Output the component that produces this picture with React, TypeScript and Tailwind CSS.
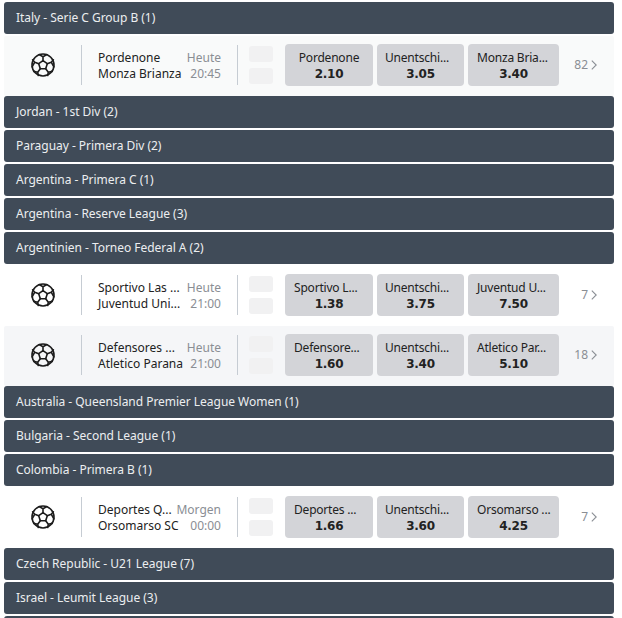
const Ball = () => (
  <svg width="24" height="24" viewBox="0 0 24 24" fill="none" stroke="#1c1c1c" strokeWidth="1.6" strokeLinejoin="round" strokeLinecap="round">
    <circle cx="12" cy="12" r="11" />
    <path d="M12 7.6l4.3 3.1-1.6 5H9.3l-1.6-5z" />
    <path d="M12 7.6V3.8M8.2 1.6L12 3.8l3.8-2.2" />
    <path d="M16.3 10.7l3.9-1.5 2.2-2.4M20.2 9.2l2.7 4.6" />
    <path d="M7.7 10.7L3.8 9.2 1.6 6.8M3.8 9.2l-2.7 4.6" />
    <path d="M14.7 15.7l2.6 3.5-.6 3.3M17.3 19.2l4-.8" />
    <path d="M9.3 15.7l-2.6 3.5.6 3.3M6.7 19.2l-4-.8" />
  </svg>
);

const Chevron = () => (
  <svg width="6" height="10" viewBox="0 0 6 10" fill="none" stroke="#8a8e94" strokeWidth="1.1">
    <path d="M0.8 0.6L5.2 5L0.8 9.4" />
  </svg>
);

const Header = ({ text, gap }: { text: string; gap?: boolean }) => (
  <div className={`h-[32px] flex items-center pl-3 bg-[#404b58] text-[#eceef0] rounded-[3px] text-[12px] tracking-[-0.03px] shrink-0 ${gap ? "mt-[2px]" : ""}`}>
    {text}
  </div>
);

type M = { a: string; b: string; d: string; t: string; o: [string, string][]; more: string; bg: string; gap?: boolean };

const Odd = ({ w, n, v, pad }: { w: string; n: string; v: string; pad: string }) => (
  <div className={`${w} h-[42px] pt-[1px] bg-[#d3d4d8] rounded-[4px] flex flex-col items-center justify-center text-[#222] text-[12px] leading-[16px] shrink-0`}>
    <span className={`w-full whitespace-nowrap tracking-[-0.2px] ${n.endsWith("...") ? `text-left ${pad}` : "text-center"}`}>{n}</span>
    <span className="font-bold text-[12px] leading-[16px] tracking-[-0.3px] font-['DejaVu_Sans',sans-serif]">{v}</span>
  </div>
);

const Match = ({ m }: { m: M }) => (
  <div className={`h-[60px] pt-[8px] pb-[10px] flex items-center rounded-[2px] ${m.bg} ${m.gap ? "mt-[2px]" : ""}`}>
    <div className="w-[77px] pl-[1px] flex justify-center shrink-0"><Ball /></div>
    <div className="w-px h-[40px] bg-[#c6ccd3] shrink-0" />
    <div className="w-[155px] pl-[16px] pr-[16px] pt-[1px] shrink-0 text-[12px] leading-[16px] text-[#222]">
      <div className="flex justify-between gap-1 whitespace-nowrap"><span>{m.a}</span><span className="text-[#8a8e94]">{m.d}</span></div>
      <div className="flex justify-between gap-1 whitespace-nowrap"><span>{m.b}</span><span className="text-[#8a8e94]">{m.t}</span></div>
    </div>
    <div className="w-px h-[40px] bg-[#c6ccd3] shrink-0" />
    <div className="w-[47px] pl-[11px] flex flex-col gap-[6px] shrink-0">
      <div className="w-[24px] h-[16px] bg-[#f1f1f2] rounded-[3px]" />
      <div className="w-[24px] h-[16px] bg-[#f1f1f2] rounded-[3px]" />
    </div>
    <div className="flex gap-[4px] shrink-0">
      <Odd w="w-[88px]" pad="pl-[9px]" n={m.o[0][0]} v={m.o[0][1]} />
      <Odd w="w-[87px]" pad="pl-[8px]" n={m.o[1][0]} v={m.o[1][1]} />
      <Odd w="w-[91px]" pad="pl-[9px]" n={m.o[2][0]} v={m.o[2][1]} />
    </div>
    <div className="flex-1 flex items-center justify-end text-[12px] text-[#8a8e94] gap-[3px] pr-[17px]">
      <span>{m.more}</span><Chevron />
    </div>
  </div>
);

const matches: Record<string, M> = {
  p: { a: "Pordenone", b: "Monza Brianza", d: "Heute", t: "20:45", more: "82", bg: "bg-[#f9fafa]", gap: true, o: [["Pordenone", "2.10"], ["Unentschi...", "3.05"], ["Monza Bria...", "3.40"]] },
  s: { a: "Sportivo Las ...", b: "Juventud Uni...", d: "Heute", t: "21:00", more: "7", bg: "bg-white", gap: true, o: [["Sportivo L...", "1.38"], ["Unentschi...", "3.75"], ["Juventud U...", "7.50"]] },
  d: { a: "Defensores ...", b: "Atletico Parana", d: "Heute", t: "21:00", more: "18", bg: "bg-[#f5f6f8]", o: [["Defensore...", "1.60"], ["Unentschi...", "3.40"], ["Atletico Par...", "5.10"]] },
  o: { a: "Deportes Q...", b: "Orsomarso SC", d: "Morgen", t: "00:00", more: "7", bg: "bg-white", gap: true, o: [["Deportes ...", "1.66"], ["Unentschi...", "3.60"], ["Orsomarso ...", "4.25"]] },
};

export default function App() {
  return (
    <div className="w-[622px] h-[618px] overflow-hidden bg-white pt-[2px] pl-[4px] pr-[8px] flex flex-col font-['Noto_Sans','DejaVu_Sans',sans-serif]">
      <Header text="Italy - Serie C Group B (1)" />
      <Match m={matches.p} />
      <Header text="Jordan - 1st Div (2)" />
      <Header text="Paraguay - Primera Div (2)" gap />
      <Header text="Argentina - Primera C (1)" gap />
      <Header text="Argentina - Reserve League (3)" gap />
      <Header text="Argentinien - Torneo Federal A (2)" gap />
      <Match m={matches.s} />
      <Match m={matches.d} />
      <Header text="Australia - Queensland Premier League Women (1)" />
      <Header text="Bulgaria - Second League (1)" gap />
      <Header text="Colombia - Primera B (1)" gap />
      <Match m={matches.o} />
      <Header text="Czech Republic - U21 League (7)" />
      <Header text="Israel - Leumit League (3)" gap />
      <Header text="" gap />
    </div>
  );
}
